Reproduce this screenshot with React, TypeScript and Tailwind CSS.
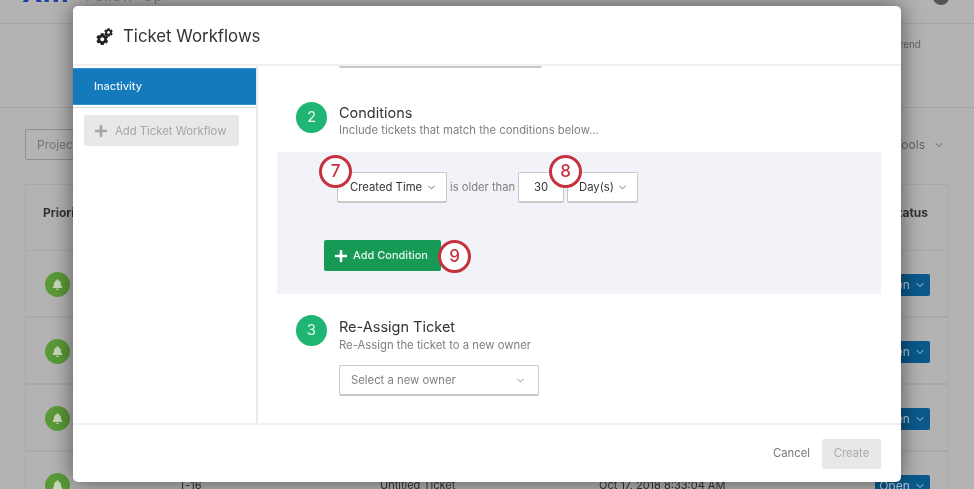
import { ChevronDown } from "lucide-react";
import { FaBell, FaCog, FaPlus } from "react-icons/fa";

const rows = [
  { id: "", title: "", date: "" },
  { id: "", title: "", date: "" },
  { id: "", title: "", date: "" },
  { id: "T-16", title: "Untitled Ticket", date: "Oct 17, 2018 8:33:04 AM" },
];

function Row({ id, title, date }: { id: string; title: string; date: string }) {
  return (
    <div className="flex h-[67px] shrink-0 items-center border-b-2 border-[#a9a9a9] pt-[2px] text-[11px] text-[#333]">
      <div className="ml-[19px] flex h-[25px] w-[25px] shrink-0 items-center justify-center rounded-full bg-[#5a9a38] text-[11px] text-[#c8d8bc]">
        <FaBell />
      </div>
      <span className="ml-[109px] w-[100px]">{id}</span>
      <span className="ml-[101px] w-[130px]">{title}</span>
      <span className="ml-[89px] w-[200px]">{date}</span>
      <div className="ml-auto mr-[18px] flex h-[22px] w-[55px] items-center justify-center gap-1 rounded-[2px] bg-[#0a5a8c] text-[12px] text-[#b9cfdf]">
        Open <ChevronDown size={12} />
      </div>
    </div>
  );
}

function Step({ n, title, sub, textClass }: { n: number; title: string; sub: string; textClass: string }) {
  return (
    <div className="flex gap-[12px]">
      <div className="flex h-[31px] w-[31px] shrink-0 items-center justify-center rounded-full bg-[#1fb573] text-[15px] text-[#e8f7ef]">
        {n}
      </div>
      <div className={textClass}>
        <div className="text-[14.5px] leading-[18px] text-[#333]">{title}</div>
        <div className="text-[11.3px] leading-[16px] text-[#808080]">{sub}</div>
      </div>
    </div>
  );
}

function Callout({ n, className }: { n: number; className: string }) {
  return (
    <div
      className={`absolute flex h-[33px] w-[33px] items-center justify-center rounded-full border-[3px] border-[#c7303d] bg-white text-[17px] font-medium text-[#c7303d] ${className}`}
    >
      {n}
    </div>
  );
}

const selectCls =
  "flex h-[31px] items-center justify-between rounded-[2px] border border-[#c9c9c9] border-b-2 bg-white text-[11.3px] text-[#333]";

export default function App() {
  return (
    <div className="relative h-[489px] w-[974px] overflow-hidden bg-[#b3b3b3] font-['Inter','Liberation_Sans',sans-serif] blur-[0.4px]">
      {/* Dimmed page behind the dialog */}
      <div className="flex h-full flex-col">
        <div className="flex h-[24px] shrink-0 items-start overflow-hidden border-b border-[#a5a5a5] pl-[22px]">
          <span className="-mt-[21px] text-[28px] font-bold leading-[26px] text-[#1f3fa8]">XM</span>
          <span className="ml-[17px] -mt-[14px] text-[16px] leading-[18px] text-[#808080]">Follow-Up</span>
          <div className="ml-auto mr-[25px] -mt-[11px] h-[16px] w-[16px] rounded-full bg-[#555]" />
        </div>
        <div className="flex h-[84px] shrink-0 justify-end border-b border-[#a5a5a5] pr-[53px] pt-[13px] text-[10px] text-[#666]">
          Trend
        </div>
        <div className="flex h-[76px] shrink-0 items-center justify-between px-[25px] pb-[4px] pt-[1px] text-[12px] text-[#777]">
          <div className="flex h-[31px] w-[120px] items-center rounded-[2px] border border-[#8f8f8f] pl-[11px]">Project</div>
          <div className="flex items-center gap-[8px] pr-[4px] text-[#666]">
            Tools <ChevronDown size={12} />
          </div>
        </div>
        <div className="ml-[25px] flex w-[924px] grow flex-col border-l border-[#a9a9a9]">
          <div className="flex h-[67px] shrink-0 items-center justify-between border-y border-r border-[#a9a9a9] pb-[10px] pl-[17px] pr-[20px] text-[12px] font-bold text-[#333]">
            <span>Priority</span>
            <span>Status</span>
          </div>
          <div className="border-r border-[#a9a9a9]">
            {rows.map((r, i) => (
              <Row key={i} {...r} />
            ))}
          </div>
        </div>
      </div>

      {/* Dialog */}
      <div className="absolute left-[73px] top-[6px] flex h-[476px] w-[828px] flex-col overflow-hidden rounded-[5px] bg-white shadow-[0_0_22px_rgba(0,0,0,0.55)]">
        <div className="flex h-[60px] shrink-0 items-center gap-[10px] border-b-2 border-[#efefef] pl-[23px] pt-[3px]">
          <div className="relative h-[17px] w-[17px] shrink-0 text-[#222]">
            <FaCog className="absolute bottom-0 left-0 text-[12.5px]" />
            <FaCog className="absolute right-0 top-0 text-[9px]" />
          </div>
          <span className="text-[16.8px] text-[#333]">Ticket Workflows</span>
        </div>
        <div className="flex min-h-0 grow">
          <div className="w-[185px] shrink-0 border-r-2 border-[#e9e9e9] pt-[2px]">
            <div className="flex h-[37px] items-center border-y border-[#2f95d6] bg-[#147abb] pl-[21px] text-[11px] font-medium text-[#e6f1f8]">
              Inactivity
            </div>
            <div className="mt-[2px] h-[1px] bg-[#dcdcdc]" />
            <div className="ml-[11px] mt-[7px] flex h-[31px] w-[155px] items-center gap-[7px] rounded-[2px] bg-[#e8e8e8] pl-[10px] pt-[1px] text-[11.3px] text-[#a6a6a6]">
              <FaPlus className="text-[14px]" />
              Add Ticket Workflow
            </div>
          </div>
          <div className="min-w-0 grow overflow-hidden pl-[38px]">
            <div className="-mt-[28px] ml-[43px] h-[30px] w-[203px] rounded-[2px] border border-[#c9c9c9] border-b-2" />
            <div className="mt-[34px] h-[50px]">
              <Step n={2} title="Conditions" sub="Include tickets that match the conditions below..." textClass="pt-[2px]" />
            </div>
            <div className="relative -ml-[19px] h-[142px] w-[604px] bg-[#f2f3f8] pl-[60px] pt-[20px]">
              <div className="flex items-center">
                <div className={`${selectCls} w-[110px] pl-[12px] pr-[9px]`}>
                  Created Time <ChevronDown size={11} className="text-[#666]" />
                </div>
                <span className="ml-[3px] w-[68px] text-[11.2px] text-[#808080]">is older than</span>
                <div className={`${selectCls} w-[46px] justify-center`}>30</div>
                <div className={`${selectCls} ml-[3px] w-[71px] pl-[11px] pr-[9px]`}>
                  Day(s) <ChevronDown size={11} className="text-[#666]" />
                </div>
              </div>
              <div className="-ml-[13px] mt-[37px] flex h-[31px] w-[117px] items-center gap-[5px] rounded-[2px] bg-[#169a55] pl-[10px] text-[11px] font-medium text-[#e7f5ec]">
                <FaPlus className="text-[14px] text-white" />
                Add Condition
              </div>
              <Callout n={7} className="left-[42px] top-[3px]" />
              <Callout n={8} className="left-[272px] top-[3px]" />
              <Callout n={9} className="left-[161px] top-[88px]" />
            </div>
            <div className="mt-[21px] h-[50px]">
              <Step n={3} title="Re-Assign Ticket" sub="Re-Assign the ticket to a new owner" textClass="pt-[3px] [&>div:last-child]:mt-[1px]" />
            </div>
            <div className={`${selectCls} ml-[43px] w-[200px] pl-[11px] pr-[12px] text-[#808080]`}>
              Select a new owner <ChevronDown size={11} className="text-[#808080]" />
            </div>
          </div>
        </div>
        <div className="flex h-[59px] shrink-0 items-center justify-end gap-[12px] border-t-2 border-[#f1f1f1] pr-[20px] text-[11.3px]">
          <span className="text-[#777]">Cancel</span>
          <div className="flex h-[30px] w-[59px] items-center justify-center rounded-[2px] bg-[#e8e8e8] text-[#ababab]">
            Create
          </div>
        </div>
      </div>
    </div>
  );
}
